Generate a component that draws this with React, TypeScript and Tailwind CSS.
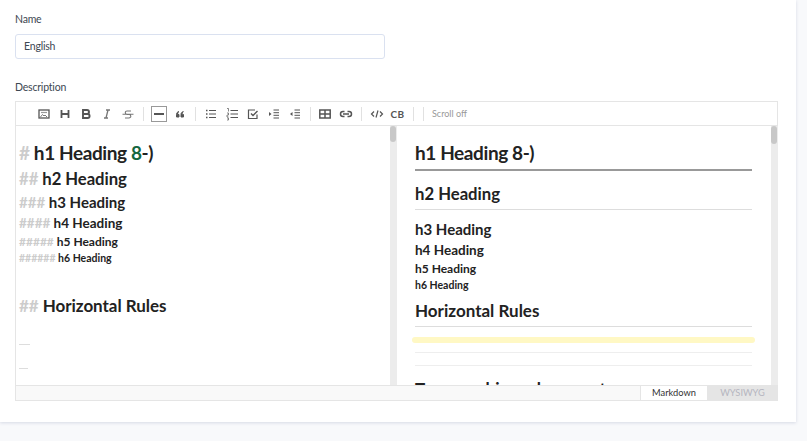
import * as React from 'react';

function Icon({ children }: { children: React.ReactNode }) {
  return (
    <svg width="14" height="14" viewBox="0 0 14 14" fill="none" stroke="#555" strokeWidth="1.5" aria-hidden="true">
      {children}
    </svg>
  );
}

function ToolButton({ children, active = false }: { children: React.ReactNode; active?: boolean }) {
  return (
    <div className="flex h-[23px] w-[21px] shrink-0 items-center justify-center">
      <div className={`flex h-4 w-4 items-center justify-center ${active ? 'border border-[#999]' : ''}`}>{children}</div>
    </div>
  );
}

function Separator() {
  return <div className="mx-[4.5px] h-[14px] w-px shrink-0 bg-[#e1e1e1]" />;
}

function Toolbar() {
  return (
    <div className="flex h-[24px] items-center border-b border-[#e5e5e5] pl-[17px] pt-px">
      <ToolButton>
        <Icon>
          <rect x="2" y="3" width="10" height="8" strokeWidth="1.3" />
          <path d="M3.5 10l2-2.5 1.5 1.5 1-1 2 2" stroke="#777" strokeWidth="1" />
          <path d="M4 5.5h6" stroke="#999" strokeWidth="1.2" />
        </Icon>
      </ToolButton>
      <ToolButton>
        <Icon>
          <path d="M3.5 3v8M10.5 3v8M3.5 7h7" strokeWidth="1.8" />
        </Icon>
      </ToolButton>
      <ToolButton>
        <Icon>
          <path d="M4 3h4a2 2 0 010 4H4zM4 7h4.6a2 2 0 010 4H4zM4 3v8" strokeWidth="1.9" />
        </Icon>
      </ToolButton>
      <ToolButton>
        <Icon>
          <path d="M6 3h4M4 11h4M8 3l-2 8" strokeWidth="1.3" stroke="#777" />
        </Icon>
      </ToolButton>
      <ToolButton>
        <Icon>
          <path d="M10 4H6a1.7 1.7 0 000 3.4h2a1.8 1.8 0 010 3.6H4M1.5 7.3h11" strokeWidth="1.1" stroke="#777" />
        </Icon>
      </ToolButton>
      <Separator />
      <ToolButton active>
        <div className="h-[2px] w-[10px] bg-[#555]" />
      </ToolButton>
      <ToolButton>
        <Icon>
          <path d="M6 4.5C4.2 5 3.5 6 3.5 7.5V10H6V7.5H4.8M10.5 4.5C8.7 5 8 6 8 7.5V10h2.5V7.5H9.3" strokeWidth="1" fill="#555" />
        </Icon>
      </ToolButton>
      <Separator />
      <ToolButton>
        <Icon>
          <path d="M5 3.5h7M5 7h7M5 10.5h7" strokeWidth="1.2" />
          <path d="M2 3.5h1.5M2 7h1.5M2 10.5h1.5" strokeWidth="1.4" />
        </Icon>
      </ToolButton>
      <ToolButton>
        <Icon>
          <path d="M5.5 3.5H13M5.5 7H13M5.5 10.5H13" strokeWidth="1.2" />
          <path d="M2 1.5h1.5v3M2 6h1.5v2H2v2h1.5M2 11h1.5v2H2" strokeWidth="0.7" />
        </Icon>
      </ToolButton>
      <ToolButton>
        <Icon>
          <path d="M11 7.5V11.5H2.5V3h6.5" strokeWidth="1.2" />
          <path d="M5 6.5l2 2 4.5-4.5" strokeWidth="1.4" />
        </Icon>
      </ToolButton>
      <ToolButton>
        <Icon>
          <path d="M6.5 3h5.5M6.5 5.7h5.5M6.5 8.3h5.5M6.5 11h5.5" strokeWidth="1" />
          <path d="M2 5l2.5 2L2 9z" fill="#555" stroke="none" />
        </Icon>
      </ToolButton>
      <ToolButton>
        <Icon>
          <path d="M6.5 3h5.5M6.5 5.7h5.5M6.5 8.3h5.5M6.5 11h5.5" strokeWidth="1" />
          <path d="M4.5 5L2 7l2.5 2z" fill="#555" stroke="none" />
        </Icon>
      </ToolButton>
      <div className="ml-[4.5px] mr-[3.5px] h-[14px] w-px shrink-0 bg-[#e1e1e1]" />
      <ToolButton>
        <Icon>
          <rect x="1.8" y="3" width="10.4" height="8" strokeWidth="1.5" />
          <path d="M1.8 7h10.4M7 3v8" strokeWidth="1.5" />
        </Icon>
      </ToolButton>
      <ToolButton>
        <Icon>
          <path d="M5.5 4.5H4a2.5 2.5 0 000 5h1.5M8.5 4.5H10a2.5 2.5 0 010 5H8.5M4 7h6" strokeWidth="1.5" />
        </Icon>
      </ToolButton>
      <Separator />
      <ToolButton>
        <Icon>
          <path d="M4 4.5L1.5 7 4 9.5M10 4.5L12.5 7 10 9.5M8 3.5L6 10.5" strokeWidth="1.2" />
        </Icon>
      </ToolButton>
      <ToolButton>
        <span className="text-[10px] font-bold leading-none tracking-[0.5px] text-[#555]">CB</span>
      </ToolButton>
      <Separator />
      <div className="ml-[4.5px] mr-[8.5px] h-[14px] w-px shrink-0 bg-[#e1e1e1]" />
      <span className="text-[9px] text-[#999]">Scroll off</span>
    </div>
  );
}

function SourceHeading({ marks, text, className }: { marks: string; text: string; className: string }) {
  return (
    <div className={`whitespace-nowrap font-bold text-[#222] ${className}`}>
      <span className="text-[#ccc]">{marks}</span> {text}
    </div>
  );
}

function SourcePane() {
  return (
    <div className="h-[259px] w-[374px] shrink-0 overflow-hidden pl-[3px] pt-[14px]">
      <div className="h-[27px] whitespace-nowrap text-[19px] font-bold leading-[26px] tracking-[-0.4px] text-[#222]">
        <span className="text-[#ccc]">#</span> h1 Heading <span className="text-[#14663f]">8</span>-)
      </div>
      <SourceHeading marks="##" text="h2 Heading" className="h-[24px] text-[16.7px] leading-[25px] tracking-[-0.05px]" />
      <SourceHeading marks="###" text="h3 Heading" className="h-[22px] text-[15px] leading-[22px]" />
      <SourceHeading marks="####" text="h4 Heading" className="mt-px h-[19px] text-[13.5px] leading-[19px]" />
      <SourceHeading marks="#####" text="h5 Heading" className="h-[18px] text-[12px] leading-[18px]" />
      <SourceHeading marks="######" text="h6 Heading" className="h-[14px] text-[10.5px] leading-[15px]" />
      <SourceHeading marks="##" text="Horizontal Rules" className="mt-[28px] h-[26px] text-[17px] leading-[26px] tracking-[-0.05px]" />
      <div className="mt-[25px] h-px w-[11px] bg-[#ddd]" />
      <div className="mt-[23px] h-px w-[9px] bg-[#ddd]" />
    </div>
  );
}

function PreviewPane() {
  return (
    <div className="h-[259px] w-[374px] shrink-0 overflow-hidden pl-[18px] pr-[19px] pt-[16px] font-bold text-[#222]">
      <div className="h-[29px] border-b-2 border-[#999] text-[19px] leading-[22px] tracking-[-0.4px]">h1 Heading 8-)</div>
      <div className="mt-[10px] h-[29px] border-b border-[#ddd] text-[16.7px] leading-[26px]">h2 Heading</div>
      <div className="mt-[8px] h-[22px] text-[15px] leading-[22px]">h3 Heading</div>
      <div className="mt-px h-[19px] text-[13.5px] leading-[19px]">h4 Heading</div>
      <div className="h-[18px] text-[12px] leading-[18px]">h5 Heading</div>
      <div className="h-[15px] text-[10.5px] leading-[15px]">h6 Heading</div>
      <div className="mt-[5px] h-[29px] border-b border-[#ddd] text-[17px] leading-[26px]">Horizontal Rules</div>
      <div className="-ml-[3px] -mr-[3px] mt-[10px] h-[6px] rounded-full bg-[#fff8c4]" />
      <div className="mt-[9px] h-px bg-[#eee]" />
      <div className="mt-[12px] h-px bg-[#eee]" />
      <div className="mt-[10px] whitespace-nowrap text-[17px] leading-[26px]">Typographic replacements</div>
    </div>
  );
}

function Scrollbar({ thumb }: { thumb: string }) {
  return (
    <div className="h-[259px] w-[7px] shrink-0 bg-[#ececec]">
      <div className={`w-[6px] rounded-[3px] bg-[#c8c8c8] ${thumb}`} />
    </div>
  );
}

function Editor() {
  return (
    <div className="mt-[6px] h-[300px] w-[763px] border border-[#e5e5e5]">
      <Toolbar />
      <div className="flex h-[259px]">
        <SourcePane />
        <Scrollbar thumb="h-[16px]" />
        <PreviewPane />
        <Scrollbar thumb="h-[18px]" />
      </div>
      <div className="flex h-[15px] justify-end border-t border-[#e5e5e5] bg-[#f9f9f9] text-[9.3px] leading-[14px]">
        <div className="w-[68px] border-l border-r border-[#e5e5e5] bg-white text-center text-[#333]">Markdown</div>
        <div className="w-[69px] bg-[#e5e5e5] text-center text-[#b5b5c0]">WYSIWYG</div>
      </div>
    </div>
  );
}

export default function App() {
  return (
    <div className="h-[441px] w-[807px] overflow-hidden bg-[#f8f9fb] font-['Lato',sans-serif]">
      <div className="h-[422px] w-[796px] bg-white pl-[15px] pt-[12px] shadow-[0_1px_3px_rgba(120,130,170,0.25)]">
        <div className="h-[15px] text-[10.5px] leading-[15px] tracking-[-0.2px] text-[#3d4852]">Name</div>
        <div className="mt-[7px] flex h-[25px] w-[370px] items-center rounded-[3px] border border-[#dae1f0] pl-2 text-[10.5px] tracking-[-0.2px] text-[#3d4852]">
          English
        </div>
        <div className="mt-[21px] h-[15px] text-[10.5px] leading-[15px] tracking-[-0.2px] text-[#3d4852]">Description</div>
        <Editor />
      </div>
    </div>
  );
}
